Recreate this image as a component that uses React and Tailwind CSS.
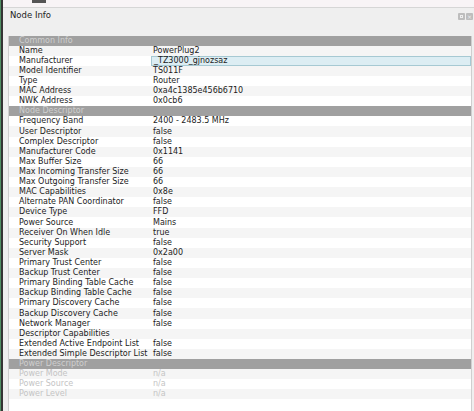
import React from 'react';

const sections = [
  {
    title: 'Common Info',
    rows: [
      ['Name', 'PowerPlug2'],
      ['Manufacturer', '_TZ3000_gjnozsaz', 'edit'],
      ['Model Identifier', 'TS011F'],
      ['Type', 'Router'],
      ['MAC Address', '0xa4c1385e456b6710'],
      ['NWK Address', '0x0cb6'],
    ],
  },
  {
    title: 'Node Descriptor',
    rows: [
      ['Frequency Band', '2400 - 2483.5 MHz'],
      ['User Descriptor', 'false'],
      ['Complex Descriptor', 'false'],
      ['Manufacturer Code', '0x1141'],
      ['Max Buffer Size', '66'],
      ['Max Incoming Transfer Size', '66'],
      ['Max Outgoing Transfer Size', '66'],
      ['MAC Capabilities', '0x8e'],
      ['Alternate PAN Coordinator', 'false'],
      ['Device Type', 'FFD'],
      ['Power Source', 'Mains'],
      ['Receiver On When Idle', 'true'],
      ['Security Support', 'false'],
      ['Server Mask', '0x2a00'],
      ['Primary Trust Center', 'false'],
      ['Backup Trust Center', 'false'],
      ['Primary Binding Table Cache', 'false'],
      ['Backup Binding Table Cache', 'false'],
      ['Primary Discovery Cache', 'false'],
      ['Backup Discovery Cache', 'false'],
      ['Network Manager', 'false'],
      ['Descriptor Capabilities', ''],
      ['Extended Active Endpoint List', 'false'],
      ['Extended Simple Descriptor List', 'false'],
    ],
  },
  {
    title: 'Power Descriptor',
    disabled: true,
    rows: [
      ['Power Mode', 'n/a'],
      ['Power Source', 'n/a'],
      ['Power Level', 'n/a'],
    ],
  },
];

function TableRows() {
  const out = [];
  let i = 0;
  sections.forEach((s) => {
    out.push(
      <div key={s.title} className="flex h-[10.12px] items-center bg-[#a0a0a0] pl-[10px] text-[#cfcfcf]">
        {s.title}
      </div>
    );
    i++;
    s.rows.forEach(([name, value, mode]) => {
      const alt = i % 2 === 1;
      out.push(
        <div
          key={s.title + name}
          className={`flex h-[10.12px] items-center ${alt ? 'bg-[#f5f5f5]' : 'bg-white'} ${s.disabled ? 'text-[#c4c4c4]' : 'text-[#1c1c1c]'}`}
        >
          <div className="w-[142px] shrink-0 pl-[10px] whitespace-nowrap">{name}</div>
          {mode === 'edit' ? (
            <div className="flex h-full flex-1 items-center border border-[#a6c9d3] bg-[#dcedf3] pl-[2px]">{value}</div>
          ) : (
            <div className="flex-1 pl-[2px] whitespace-nowrap">{value}</div>
          )}
        </div>
      );
      i++;
    });
  });
  return out;
}

export default function App() {
  return (
    <div className="flex h-[411px] w-[474px] overflow-hidden bg-[#efefef] font-['DejaVu_Sans',sans-serif] text-[8px] leading-none">
      <div className="w-[1px] bg-[#4f8f63]" />
      <div className="w-[2px] bg-[#353535]" />
      <div className="flex flex-1 flex-col">
        <div className="h-[8px] border-b border-[#d6d6d6] bg-[#f8f4f6]">
          <div className="ml-[29px] h-[3px] w-[14px] bg-[#555]" />
        </div>
        <div className="flex h-[27.5px] items-start justify-between pl-[7px] pr-[1px] pt-[3px]">
          <span className="text-[8.5px] text-[#222]">Node Info</span>
          <div className="mt-[2px] flex gap-[1px]">
            <div className="flex h-[7px] w-[7px] items-center justify-center rounded-[1px] bg-[#bdbdbd]">
              <div className="h-[3px] w-[3px] border border-[#eee]" />
            </div>
            <div className="flex h-[7px] w-[7px] items-center justify-center rounded-[1px] bg-[#bdbdbd] text-[6px] text-[#eee]">
              ×
            </div>
          </div>
        </div>
        <div className="ml-[5px] mr-[2px] flex-1 border-l border-r border-[#cfcfcf] bg-white">
          <TableRows />
        </div>
      </div>
    </div>
  );
}
